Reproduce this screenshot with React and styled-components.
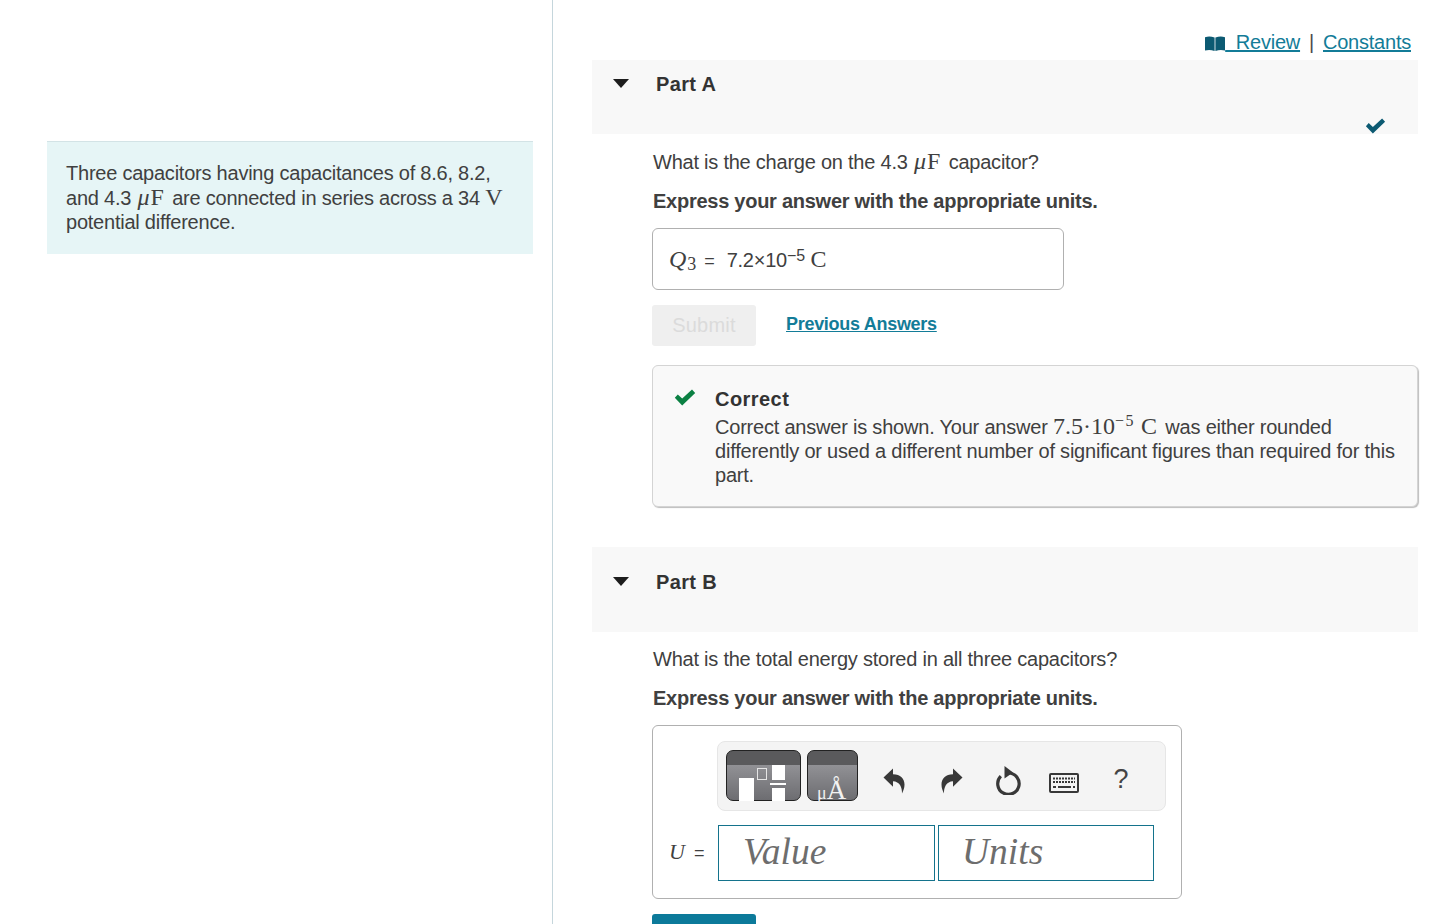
import React from "react";
import styled, { createGlobalStyle } from "styled-components";

const Global = createGlobalStyle`
  html, body { margin: 0; padding: 0; background: #fff; }
  body { font-family: "Liberation Sans", Arial, sans-serif; color: #404040; overflow: hidden; }
`;

const Page = styled.div`
  display: grid;
  grid-template-columns: 553px 1fr;
  width: 1452px;
  height: 924px;
  overflow: hidden;
  font-size: 20px;
  letter-spacing: -0.23px;
`;
const LeftPane = styled.aside`
  border-right: 1px solid #c5d6dc;
  padding: 141px 19px 0 47px;
`;
const Intro = styled.div`
  background: #e6f5f6;
  border-top: 1px solid #d3e3e6;
  height: 113px;
  box-sizing: border-box;
  padding: 19.4px 20px 0 19px;
  line-height: 24.5px;
`;
const RightPane = styled.main`
  padding: 0 34px 0 39px;
`;
const TopLinks = styled.div`
  display: flex;
  justify-content: flex-end;
  align-items: center;
  height: 60px;
  padding: 24px 7px 0 0;
  box-sizing: border-box;
  gap: 9px;
  line-height: 24px;
`;
const LinkText = styled.a`
  color: #137c98;
  text-decoration: underline;
`;
const BookIcon = styled.svg`
  vertical-align: -2px;
`;
const Divider = styled.span`
  color: #4a4a4a;
`;
const PartHeader = styled.div`
  position: relative;
  display: flex;
  align-items: flex-start;
  background: #f8f8f8;
  height: ${(p) => p.$h}px;
  padding: ${(p) => p.$top}px 0 0 21px;
  box-sizing: border-box;
`;
const Caret = styled.span`
  width: 0;
  height: 0;
  margin-top: 8px;
  border-left: 8px solid transparent;
  border-right: 8px solid transparent;
  border-top: 9px solid #1d1d1d;
`;
const PartTitle = styled.h2`
  margin: 0 0 0 27px;
  font-size: 20px;
  line-height: 26px;
  font-weight: 700;
  color: #333;
  letter-spacing: 0.35px;
`;
const DoneMark = styled.svg`
  position: absolute;
  right: 32px;
  bottom: 0;
  width: 21px;
  height: 16px;
`;
const PartBody = styled.section`
  padding-left: 60px;
`;
const Question = styled.p`
  margin: ${(p) => p.$top}px 0 0;
  line-height: 26px;
  height: 26px;
  padding-left: 1px;
`;
const Instruction = styled.p`
  margin: 13px 0 0;
  font-weight: 700;
  line-height: 26px;
  height: 26px;
  letter-spacing: -0.26px;
  padding-left: 1px;
`;
const Math = styled.span`
  font-family: "Liberation Serif", "DejaVu Serif", serif;
  font-size: 24px;
  letter-spacing: ${(p) => p.$track || 0}px;
  line-height: 0;
  margin-right: ${(p) => p.$after || 0}px;
`;
const MathItalic = styled.i`
  font-family: "Liberation Serif", "DejaVu Serif", serif;
  font-size: 24px;
  letter-spacing: ${(p) => p.$track || 0}px;
  margin-left: ${(p) => p.$before || 0}px;
  line-height: 0;
`;
const Sup = styled.sup`
  font-size: ${(p) => p.$size || 16}px;
  line-height: 0;
  vertical-align: ${(p) => p.$lift || 8}px;
  letter-spacing: ${(p) => p.$track || 0}px;
`;
const Sub = styled.sub`
  font-family: "Liberation Serif", serif;
  font-size: 18px;
  line-height: 0;
  vertical-align: -3px;
  letter-spacing: 0;
  margin-left: 1px;
`;
const AnswerBox = styled.div`
  width: 412px;
  height: 62px;
  margin-top: 14px;
  padding: 0 0 0 16px;
  line-height: 62px;
  box-sizing: border-box;
  border: 1px solid #b0b0b0;
  border-radius: 6px;
  font-size: 20px;
  white-space: nowrap;
`;
const Equals = styled.span`
  margin: 0 12px 0 8px;
  font-size: 18px;
`;
const Actions = styled.div`
  display: flex;
  align-items: center;
  margin-top: 15px;
  gap: 30px;
`;
const SubmitButton = styled.button`
  width: 104px;
  height: 41px;
  border: 0;
  border-radius: 3px;
  background: ${(p) => (p.$active ? "#0c7a9a" : "#efefef")};
  color: #dbdbdb;
  font: inherit;
  letter-spacing: 0.25px;
  padding: 0;
`;
const BoldLink = styled.a`
  color: #137c98;
  font-size: 18px;
  font-weight: 700;
  text-decoration: underline;
  letter-spacing: -0.29px;
  margin-bottom: 2px;
`;
const Feedback = styled.div`
  display: flex;
  width: 766px;
  height: 142px;
  margin: 19px 0 1px;
  padding: 21px 20px 0 21px;
  box-sizing: border-box;
  background: #f9f9f9;
  border: 1px solid #d4d4d4;
  box-shadow: 1px 1px 1px #bdbdbd;
  border-radius: 6px;
  gap: 19px;
`;
const CheckIcon = styled.svg`
  flex: 0 0 auto;
  width: 22px;
  height: 17px;
  margin-top: 2px;
`;
const FeedbackText = styled.div`
  line-height: 24px;
  flex: 1;
  letter-spacing: -0.21px;
`;
const FeedbackTitle = styled.div`
  font-weight: 700;
  line-height: 24px;
  margin-bottom: 4px;
  color: #333;
  letter-spacing: 0.45px;
`;
const PartSpacer = styled.div`
  height: 39px;
`;
const InputCard = styled.div`
  width: 530px;
  height: 174px;
  margin-top: 14px;
  padding: 15px 11px 0 16px;
  box-sizing: border-box;
  border: 1px solid #b0b0b0;
  border-radius: 6px;
`;
const Toolbar = styled.div`
  display: flex;
  align-items: center;
  margin-left: 48px;
  width: 449px;
  height: 70px;
  padding: 0 0 1px 8px;
  box-sizing: border-box;
  background: #f4f4f4;
  border: 1px solid #e6e6e6;
  border-radius: 8px;
`;
const Palette = styled.div`
  position: relative;
  flex: 0 0 auto;
  width: ${(p) => p.$w}px;
  height: 51px;
  margin-right: 6px;
  box-sizing: border-box;
  border: 1px solid #222;
  border-radius: 7px;
  background: linear-gradient(#5a5a5c 0, #5a5a5c 14px, #919195 14px, #6d6d71 100%);
`;
const Glyph = styled.span`
  position: absolute;
  background: ${(p) => (p.$outline ? "transparent" : "#fff")};
  border: ${(p) => (p.$outline ? "1.5px solid #e5e5e5" : "0")};
  box-sizing: border-box;
  left: ${(p) => p.$x}px;
  top: ${(p) => p.$y}px;
  width: ${(p) => p.$w}px;
  height: ${(p) => p.$h}px;
`;
const UnitGlyph = styled.span`
  position: absolute;
  left: 9px;
  bottom: -2px;
  color: #f2f2f2;
  font-family: "Liberation Serif", serif;
  letter-spacing: 0;
  line-height: 18px;
  white-space: nowrap;
`;
const SmallMu = styled.span`
  font-size: 18px;
`;
const BigA = styled.span`
  font-size: 27px;
`;
const ToolButton = styled.span`
  display: flex;
  flex: 0 0 auto;
  justify-content: center;
  align-items: center;
  width: ${(p) => p.$w}px;
  height: 40px;
  margin-left: ${(p) => p.$ml || 0}px;
  margin-top: ${(p) => p.$drop || 0}px;
`;
const HelpMark = styled.span`
  font-size: 27px;
  letter-spacing: 0;
  color: #444;
`;
const InputRow = styled.div`
  display: flex;
  align-items: center;
  margin-top: 14px;
`;
const InputLabel = styled.span`
  width: 49px;
  margin-bottom: 2px;
  font-size: 18px;
  letter-spacing: 0;
  white-space: nowrap;
`;
const InputSymbol = styled.i`
  font-family: "Liberation Serif", serif;
  font-size: 22px;
  margin-right: 4px;
`;
const FieldBox = styled.div`
  width: ${(p) => p.$w}px;
  height: 56px;
  box-sizing: border-box;
  margin-right: 3px;
  border: 1px solid #14738c;
  padding-left: ${(p) => p.$pl}px;
  font-family: "Liberation Serif", serif;
  font-style: italic;
  font-size: 37.5px;
  line-height: 51px;
  color: #6d6d6d;
  letter-spacing: 0;
`;

const MathUF = () => (
  <>
    <MathItalic $before={1} $track={1}>μ</MathItalic>
    <Math $track={1} $after={2}>F</Math>
  </>
);

const CHECK = "M0.8 8.8 3.8 5.4 8.2 9.6 18 0.6 21.2 4 8.2 16.4z";

export default function App() {
  return (
    <Page>
      <Global />
      <LeftPane>
        <Intro>
          Three capacitors having capacitances of 8.6, 8.2, and 4.3 <MathUF /> are connected in series across a 34 <Math>V</Math> potential difference.
        </Intro>
      </LeftPane>
      <RightPane>
        <TopLinks>
          <LinkText href="#">
            <BookIcon width="20" height="15" viewBox="0 0 20 15" aria-hidden="true">
              <path d="M0 1.200C3 .3 6 .3 9.600 1.500V15C6 13.800 3 13.800 0 14.600zM20 1.200C17 .3 14 .3 10.400 1.500V15C14 13.800 17 13.800 20 14.600z" fill="#0c5a72" />
            </BookIcon>
            &nbsp;&nbsp;Review
          </LinkText>
          <Divider>|</Divider>
          <LinkText href="#">Constants</LinkText>
        </TopLinks>

        <PartHeader $h={74} $top={11}>
          <Caret />
          <PartTitle>Part A</PartTitle>
          <DoneMark viewBox="0 0 22 17">
            <path d={CHECK} fill="#0c5a72" />
          </DoneMark>
        </PartHeader>
        <PartBody>
          <Question $top={15}>
            What is the charge on the 4.3 <MathUF /> capacitor?
          </Question>
          <Instruction>Express your answer with the appropriate units.</Instruction>
          <AnswerBox>
            <MathItalic>Q</MathItalic>
            <Sub>3</Sub>
            <Equals>=</Equals>
            7.2×10<Sup $size={16} $lift={6}>−5</Sup> <Math>C</Math>
          </AnswerBox>
          <Actions>
            <SubmitButton>Submit</SubmitButton>
            <BoldLink href="#">Previous Answers</BoldLink>
          </Actions>
          <Feedback>
            <CheckIcon viewBox="0 0 22 17" aria-hidden="true">
              <path d={CHECK} fill="#0b8043" />
            </CheckIcon>
            <FeedbackText>
              <FeedbackTitle>Correct</FeedbackTitle>
              Correct answer is shown. Your answer <Math $after={3}>7.5·10<Sup $track={1.5}>−5</Sup> C</Math> was either rounded differently or used a different number of significant figures than required for this part.
            </FeedbackText>
          </Feedback>
        </PartBody>
        <PartSpacer />
        <PartHeader $h={85} $top={22}>
          <Caret />
          <PartTitle>Part B</PartTitle>
        </PartHeader>
        <PartBody>
          <Question $top={14}>What is the total energy stored in all three capacitors?</Question>
          <Instruction>Express your answer with the appropriate units.</Instruction>
          <InputCard>
            <Toolbar>
              <Palette $w={75}>
                <Glyph $x={12} $y={27} $w={15} $h={23} />
                <Glyph $outline $x={30} $y={17} $w={10} $h={12} />
                <Glyph $x={45} $y={14} $w={13} $h={15} />
                <Glyph $x={43} $y={32} $w={16} $h={2} />
                <Glyph $x={45} $y={37} $w={13} $h={13} />
              </Palette>
              <Palette $w={51}>
                <UnitGlyph><SmallMu>μ</SmallMu><BigA>Å</BigA></UnitGlyph>
              </Palette>
              <ToolButton $w={48} $ml={6} $drop={10}>
                <svg width="22" height="26" viewBox="0 0 22 26" aria-hidden="true">
                  <path d="M0.500 9.500 10 0.500V6.200C17.500 6.200 21.500 10.500 21.500 16.500 21.500 19.800 20.500 22.500 19 25.500 19.300 19 16.500 13.500 10 13.200V18.800z" fill="#383838" />
                </svg>
              </ToolButton>
              <ToolButton $w={48} $ml={10} $drop={10}>
                <svg width="22" height="26" viewBox="0 0 22 26" aria-hidden="true">
                  <path d="M21.500 9.500 12 0.500V6.200C4.500 6.200 0.500 10.500 0.500 16.500 0.500 19.800 1.500 22.500 3 25.500 2.700 19 5.500 13.500 12 13.200V18.800z" fill="#383838" />
                </svg>
              </ToolButton>
              <ToolButton $w={48} $ml={8} $drop={9}>
                <svg width="25" height="29" viewBox="0 0 25 29" aria-hidden="true">
                  <path d="M12.500 7A10.700 10.700 0 1 1 4.800 10.200" fill="none" stroke="#383838" strokeWidth="3.200" />
                  <path d="M8.500 0l8.500 6.500-8.500 6z" fill="#383838" />
                </svg>
              </ToolButton>
              <ToolButton $w={48} $ml={8} $drop={14}>
                <svg width="30" height="20" viewBox="0 0 30 20" aria-hidden="true">
                  <rect x="1" y="1" width="28" height="18" rx="1" fill="#f4f4f4" stroke="#383838" strokeWidth="2" />
                  <path d="M4 5.500h22M4 9h22" stroke="#383838" strokeWidth="2" strokeDasharray="2 1" />
                  <path d="M4 14h3M9 14h13M24 14h2" stroke="#383838" strokeWidth="2" />
                </svg>
              </ToolButton>
              <ToolButton $w={48} $ml={9} $drop={8}>
                <HelpMark>?</HelpMark>
              </ToolButton>
            </Toolbar>
            <InputRow>
              <InputLabel><InputSymbol>U</InputSymbol> =</InputLabel>
              <FieldBox $w={217} $pl={24}>Value</FieldBox>
              <FieldBox $w={216} $pl={23}>Units</FieldBox>
            </InputRow>
          </InputCard>
          <Actions>
            <SubmitButton $active />
          </Actions>
        </PartBody>
      </RightPane>
    </Page>
  );
}
